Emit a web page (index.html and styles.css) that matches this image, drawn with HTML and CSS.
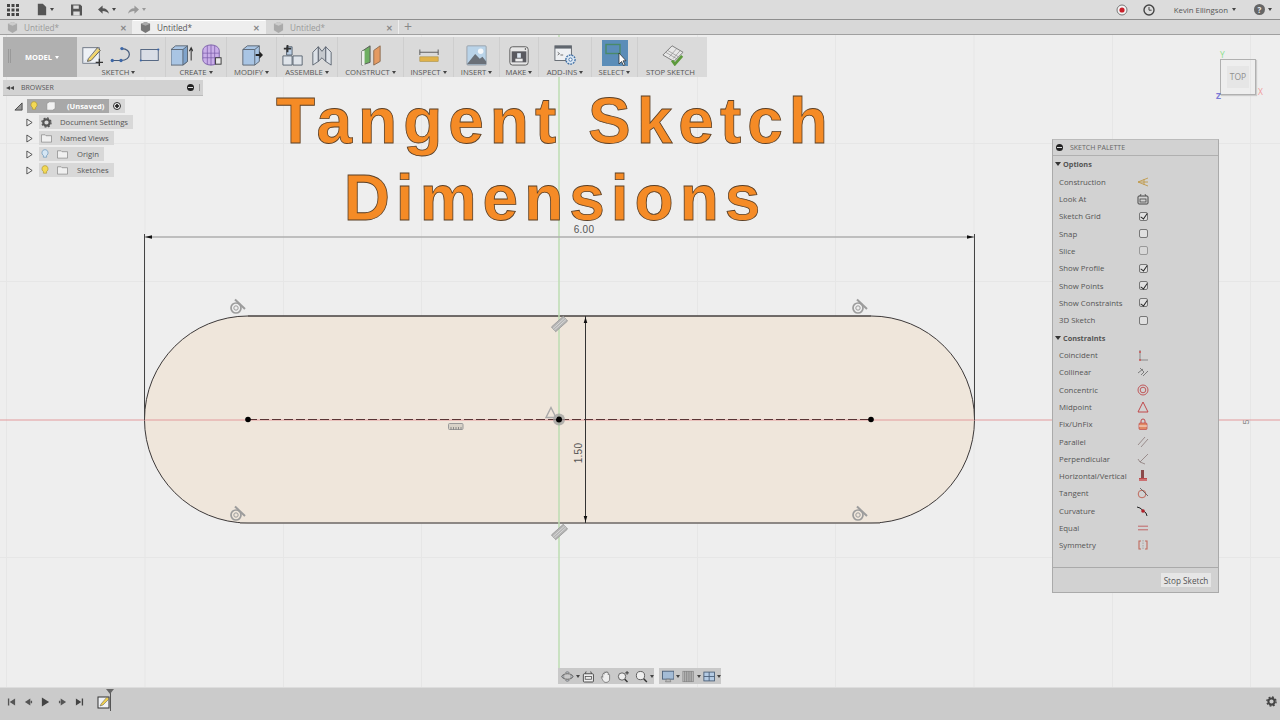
FILE: index.html
```html
<!DOCTYPE html>
<html lang="en">
<head>
<meta charset="utf-8">
<title>Tangent Sketch Dimensions</title>
<link rel="stylesheet" href="styles.css">
</head>
<body>
<div class="app">
  <header class="topbar">
    <div class="top-left">
      <svg class="ti ti-grid" viewBox="0 0 12 12"><path fill="#444" d="M0 0h3v3H0zM4.500 0h3v3h-3zM9 0h3v3H9zM0 4.500h3v3H0zM4.500 4.500h3v3h-3zM9 4.500h3v3H9zM0 9h3v3H0zM4.500 9h3v3h-3zM9 9h3v3H9z"/></svg>
      <span class="ti-group ti-doc">
        <svg class="ti" viewBox="0 0 12 14"><path fill="#555" d="M1 0h6l4 4v10H1z"/></svg><i class="caret"></i>
      </span>
      <svg class="ti ti-save" viewBox="0 0 12 12"><path fill="#555" d="M0 0h10l2 2v10H0z"/><path fill="#ddd" d="M2.500 1h6v3.500h-6zM2.500 7.500h7V12h-7z"/></svg>
      <span class="ti-group ti-undo">
        <svg class="ti" viewBox="0 0 12 10"><path fill="#555" d="M5 0v3c4 0 6 2 7 6-2-2-4-3-7-3v3L0 4.500z"/></svg><i class="caret"></i>
      </span>
      <span class="ti-group ti-redo">
        <svg class="ti" viewBox="0 0 12 10"><path fill="#999" d="M7 0v3C3 3 1 5 0 9c2-2 4-3 7-3v3l5-4.500z"/></svg><i class="caret caret-pale"></i>
      </span>
    </div>
    <div class="top-right">
      <svg class="ti-rec" viewBox="0 0 12 12"><circle cx="6" cy="6" r="5" fill="#f4f4f4" stroke="#777"/><circle cx="6" cy="6" r="2.600" fill="#c8202a"/></svg>
      <svg class="ti-clock" viewBox="0 0 12 12"><circle cx="6" cy="6" r="5" fill="none" stroke="#444" stroke-width="1.400"/><path d="M6 3v3.200h2.600" fill="none" stroke="#444"/></svg>
      <span class="user">Kevin Ellingson</span><i class="caret"></i>
      <span class="help">?</span><i class="caret"></i>
    </div>
  </header>

  <nav class="tabs">
    <div class="tab">
      <svg class="cube" viewBox="0 0 12 12"><path fill="#aaa" d="M1 2l5-2 5 2v7l-5 3-5-3z"/><path fill="#ccc" d="M1 2l5-2 5 2-5 2z"/></svg>
      <span class="tab-name">Untitled*</span><span class="tab-x">✕</span>
    </div>
    <div class="tab tab-active">
      <svg class="cube" viewBox="0 0 12 12"><path fill="#777" d="M1 2l5-2 5 2v7l-5 3-5-3z"/><path fill="#aaa" d="M1 2l5-2 5 2-5 2z"/></svg>
      <span class="tab-name">Untitled*</span><span class="tab-x">✕</span>
    </div>
    <div class="tab">
      <svg class="cube" viewBox="0 0 12 12"><path fill="#aaa" d="M1 2l5-2 5 2v7l-5 3-5-3z"/><path fill="#ccc" d="M1 2l5-2 5 2-5 2z"/></svg>
      <span class="tab-name">Untitled*</span><span class="tab-x">✕</span>
    </div>
    <span class="tab-plus">+</span>
  </nav>

  <main class="viewport">
    <svg class="canvas" viewBox="0 35 1280 652">
      <defs>
        <g id="tangent-mark" fill="none" stroke="#9c9c9c">
          <circle cx="0" cy="0" r="5" stroke-width="1.700"/>
          <circle cx="0" cy="0" r="2.200" stroke-width="1"/>
          <path d="M-1-8.500L9 1" stroke-width="2"/>
        </g>
        <g id="parallel-mark">
          <rect x="-8" y="-3.200" width="16" height="6.400" fill="#b4b4b4" stroke="#9a9a9a" stroke-width=".8"/>
          <path d="M-8-1H8M-8 1H8" stroke="#e4e4e4" stroke-width=".7"/>
        </g>
      </defs>
      <g stroke="#e6e6e6" stroke-width="1">
        <path d="M6.500 35V687M145 35V687M283.500 35V687M421.500 35V687M697.500 35V687M835.500 35V687M974 35V687M1112.500 35V687M1250.500 35V687"/>
        <path d="M0 143.500H1280M0 281.500H1280M0 557.500H1280"/>
      </g>
      <rect x="144.500" y="316" width="830" height="207" rx="103.500" fill="#efe6db" stroke="#3c3838" stroke-width="1"/>
      <path d="M248 316H871" stroke="#4a4542" stroke-width="1"/>
      <path d="M240 523H880" stroke="#8a8580" stroke-width="1.500"/>
      <path d="M0 420H1280" stroke="#e39a9c" stroke-width="1"/>
      <path d="M559 35V669" stroke="#bcdcb2" stroke-width="1.500"/>
      <path d="M248 419.500H871" stroke="#5a3434" stroke-width="1" stroke-dasharray="9 3"/>
      <path d="M144.500 234V420M974.500 234V420" stroke="#444" stroke-width="1"/>
      <path d="M145 237H974" stroke="#aeaeae" stroke-width="1.500"/>
      <path d="M145 237l7-1.800v3.600zM974 237l-7-1.800v3.600z" fill="#111"/>
      <text class="dim" x="584" y="233" text-anchor="middle">6.00</text>
      <path d="M585.500 316V523" stroke="#333" stroke-width="1"/>
      <path d="M585.500 317l-1.800 6h3.600zM585.500 522l-1.800-6h3.600z" fill="#111"/>
      <text class="dim" text-anchor="middle" transform="translate(582 453) rotate(-90)">1.50</text>
      <circle cx="248" cy="419.500" r="2.800" fill="#000"/>
      <circle cx="871" cy="419.500" r="2.800" fill="#000"/>
      <circle cx="559" cy="419.500" r="6" fill="#999" opacity=".7"/>
      <circle cx="559" cy="419.500" r="3" fill="#000"/>

      <use href="#tangent-mark" transform="translate(236 308)"/>
      <use href="#tangent-mark" transform="translate(858 308)"/>
      <use href="#tangent-mark" transform="translate(236 515)"/>
      <use href="#tangent-mark" transform="translate(858 515)"/>
      <use href="#parallel-mark" transform="translate(559.500 324) rotate(-42)"/>
      <use href="#parallel-mark" transform="translate(559.500 532) rotate(-42)"/>
      <path d="M551 407.500l5 10h-10z" fill="none" stroke="#a8a8a8" stroke-width="1.400"/>
      <rect x="448.500" y="423.500" width="14.500" height="6" rx="1" fill="#d8d2c8" stroke="#9a9a9a" stroke-width="1"/>
      <path d="M451 427v2.500M453.500 427v2.500M456 427v2.500M458.500 427v2.500M461 427v2.500" stroke="#777" stroke-width=".8"/>
      <text class="axis" transform="translate(1249 422) rotate(-90)" text-anchor="middle">5</text>
    </svg>

    <h1 class="title"><span class="title-line">Tangent Sketch</span><span class="title-line">Dimensions</span></h1>

    <div class="toolbar">
      <div class="model"><span class="grip"></span><span class="model-name">MODEL</span><i class="caret caret-white"></i></div>
      <section class="group g-sketch">
        <div class="icons">
          <svg class="icon" viewBox="0 0 24 24"><rect x="2" y="4" width="18" height="17" fill="#eef1f5" stroke="#6a7382"/><path d="M8 16l10-12 3 3-10 11-4 1z" fill="#f2d56b" stroke="#555"/><path d="M16 20h8M20 16v8" stroke="#333" stroke-width="1.500"/><path d="M2 21L20 4" stroke="#c8d2e0" stroke-width=".6"/></svg>
          <svg class="icon" viewBox="0 0 24 24"><path d="M2 18h10c12 0 12-13 1-13" fill="none" stroke="#445a7a" stroke-width="1.300"/><circle cx="2.500" cy="18" r="1.800" fill="#3d67a8"/><circle cx="12" cy="18" r="1.800" fill="#3d67a8"/><circle cx="13" cy="5" r="1.800" fill="#3d67a8"/></svg>
          <svg class="icon" viewBox="0 0 24 24"><rect x="2" y="6" width="19" height="12" fill="#d9dee6" stroke="#4d5f7c"/><circle cx="2" cy="18" r="1.200" fill="#3d67a8"/><circle cx="21" cy="6" r="1.200" fill="#3d67a8"/></svg>
        </div>
        <span class="label">SKETCH<i class="caret"></i></span>
      </section>
      <section class="group g-create">
        <div class="icons">
          <svg class="icon" viewBox="0 0 24 24"><path d="M0 6l5-4h13v17l-5 4H0z" fill="#a9c5e4" stroke="#5a6572"/><path d="M13 6l5-4v17l-5 4z" fill="#7fa3cb" stroke="#5a6572"/><path d="M0 6h13" stroke="#5a6572"/><path d="M22 18V5M20 8l2-4 2 4" fill="none" stroke="#333" stroke-width="1.100"/></svg>
          <svg class="icon" viewBox="0 0 24 24"><path d="M3 7a9 6 0 0 1 18 0v10a9 6 0 0 1-18 0z" fill="#c9aee8" stroke="#7a5ca8"/><path d="M3 10h18M3 15h18M8 2v20M12 1v22M16 2v20" stroke="#7a5ca8" stroke-width=".8"/><rect x="17" y="15" width="6" height="7" fill="#e8e8e8" stroke="#333"/></svg>
        </div>
        <span class="label">CREATE<i class="caret"></i></span>
      </section>
      <section class="group g-modify">
        <div class="icons">
          <svg class="icon" viewBox="0 0 24 24"><path d="M2 6l5-4h13v17l-5 4H2z" fill="#a9c5e4" stroke="#5a6572"/><path d="M2 6h13v17M15 6l5-4" fill="none" stroke="#5a6572"/><path d="M16 11h4V8l4 4-4 4v-3h-4z" fill="#222"/></svg>
        </div>
        <span class="label">MODIFY<i class="caret"></i></span>
      </section>
      <section class="group g-assemble">
        <div class="icons">
          <svg class="icon" viewBox="0 0 24 24"><path d="M1 13h10v10H1zM12 13h10v10H12z" fill="#dfe4ea" stroke="#55606f"/><path d="M5 3h6v9H5z" fill="#b9cde3" stroke="#55606f"/><path d="M2 5h8M6 1v8" stroke="#333" stroke-width="2"/></svg>
          <svg class="icon" viewBox="0 0 24 24"><path d="M2 9l6-6v16l-6 4zM16 3l6 6v14l-6-4z" fill="#dde2e8" stroke="#5b6470"/><path d="M8 3l4 5 4-5v16l-4-4-4 4z" fill="#c5c9ce" stroke="#5b6470"/></svg>
        </div>
        <span class="label">ASSEMBLE<i class="caret"></i></span>
      </section>
      <section class="group g-construct">
        <div class="icons">
          <svg class="icon" viewBox="0 0 24 24"><path d="M2 8l9-6v18l-9 3z" fill="#6faf62" stroke="#555"/><path d="M2 8v15h3V7z" fill="#eee"/><path d="M15 7l7-5v17l-7 4z" fill="#e49a62" stroke="#8a6a50"/></svg>
        </div>
        <span class="label">CONSTRUCT<i class="caret"></i></span>
      </section>
      <section class="group g-inspect">
        <div class="icons">
          <svg class="icon" viewBox="0 0 24 24"><path d="M2 9h20M2 6v6M22 6v6" stroke="#555" fill="none"/><rect x="2" y="14" width="20" height="5" fill="#e0b24a" stroke="#a78a3a" stroke-width=".6"/></svg>
        </div>
        <span class="label">INSPECT<i class="caret"></i></span>
      </section>
      <section class="group g-insert">
        <div class="icons">
          <svg class="icon" viewBox="0 0 24 24"><rect x="1" y="2" width="21" height="21" rx="1" fill="#b9d3e8" stroke="#98a0a8"/><path d="M1 22l9-11 5 5 3-2 4 5v3H1z" fill="#6a7078"/><circle cx="16" cy="8" r="3" fill="#f4f7fa"/></svg>
        </div>
        <span class="label">INSERT<i class="caret"></i></span>
      </section>
      <section class="group g-make">
        <div class="icons">
          <svg class="icon" viewBox="0 0 24 24"><rect x="2" y="3" width="20" height="20" rx="3" fill="#e6e6e6" stroke="#555"/><rect x="4" y="8" width="16" height="12" fill="#5a5a60"/><path d="M8 16h8v3H8z" fill="#eee"/><path d="M10 10h4v5h-4z" fill="#dfe8f2"/><circle cx="19" cy="5.500" r=".8" fill="#333"/></svg>
        </div>
        <span class="label">MAKE<i class="caret"></i></span>
      </section>
      <section class="group g-addins">
        <div class="icons">
          <svg class="icon" viewBox="0 0 24 24"><rect x="1" y="2" width="18" height="16" fill="#eef0f3" stroke="#60666e"/><path d="M1 2h18v3H1z" fill="#60666e"/><path d="M4 9l2 1.500L4 12M7 12h3" stroke="#444" fill="none" stroke-width=".8"/><circle cx="18" cy="17" r="5" fill="#dce8f4" stroke="#3f6fa5" stroke-width="1.500" stroke-dasharray="2 1"/><circle cx="18" cy="17" r="1.800" fill="#fff" stroke="#3f6fa5"/></svg>
        </div>
        <span class="label">ADD-INS<i class="caret"></i></span>
      </section>
      <section class="group g-select">
        <div class="select-btn">
          <svg class="select-icon" viewBox="0 0 26 26"><rect x="4" y="4.500" width="14" height="9" fill="none" stroke="#4a8a68" stroke-width="1.400"/><path d="M17 13v11l2.500-2.500 2 4 1.500-.8-2-3.900H24z" fill="#fff" stroke="#222" stroke-width=".7"/></svg>
        </div>
        <span class="label">SELECT<i class="caret"></i></span>
      </section>
      <section class="group g-stop">
        <div class="icons">
          <svg class="icon" viewBox="0 0 24 24"><path d="M1 12l10-10 12 7-10 10z" fill="#e7e7e7" stroke="#777"/><path d="M6 7l12 7M11 2l-5 5M4 9l12 7M16 5l-8 9M20 7l-8 9" stroke="#888" stroke-width=".7"/><path d="M11 18l3 4 8-9" fill="none" stroke="#5d9a3c" stroke-width="3"/></svg>
        </div>
        <span class="label">STOP SKETCH</span>
      </section>
    </div>

    <aside class="browser">
      <div class="browser-head">
        <span class="arrows"><i></i><i></i></span><span class="browser-title">BROWSER</span>
        <span class="dot-minus"></span><span class="pipe"></span>
      </div>
      <ul class="tree">
        <li class="row row-root">
          <svg class="tri-open" viewBox="0 0 10 10"><path d="M9 1v8H1z" fill="#999" stroke="#444"/></svg>
          <span class="pill pill-root">
            <svg class="bulb" viewBox="0 0 10 12"><path d="M5 .5a4 4 0 0 1 2 7.400V10H3V7.900A4 4 0 0 1 5 .5z" fill="#f3d955" stroke="#a28a28" stroke-width=".7"/></svg>
            <svg class="box" viewBox="0 0 12 12"><path d="M1 3l3-2h7v8l-3 2H1z" fill="#f2f2f2" stroke="#888" stroke-width=".7"/></svg>
            <span class="root-name">(Unsaved)</span>
          </span>
          <span class="radio"><i></i></span>
        </li>
        <li class="row">
          <svg class="tri" viewBox="0 0 8 10"><path d="M1 1l6 4-6 4z" fill="#f2f2f2" stroke="#444"/></svg>
          <span class="pill">
            <svg class="gear" viewBox="0 0 12 12"><circle cx="6" cy="6" r="3.500" fill="none" stroke="#555" stroke-width="2.400"/><circle cx="6" cy="6" r="5" fill="none" stroke="#555" stroke-width="1.400" stroke-dasharray="2 1.930"/></svg>
            <span class="item-a">Document Settings</span>
          </span>
        </li>
        <li class="row">
          <svg class="tri" viewBox="0 0 8 10"><path d="M1 1l6 4-6 4z" fill="#f2f2f2" stroke="#444"/></svg>
          <span class="pill">
            <svg class="folder" viewBox="0 0 12 10"><path d="M.5 1.500h4l1 1h6v7H.500z" fill="#f0f0f0" stroke="#888" stroke-width=".8"/></svg>
            <span class="item-a">Named Views</span>
          </span>
        </li>
        <li class="row">
          <svg class="tri" viewBox="0 0 8 10"><path d="M1 1l6 4-6 4z" fill="#f2f2f2" stroke="#444"/></svg>
          <span class="pill">
            <svg class="bulb bulb-s" viewBox="0 0 10 12"><path d="M5 .5a4 4 0 0 1 2 7.400V10H3V7.900A4 4 0 0 1 5 .5z" fill="#d5e6f4" stroke="#5f8db5" stroke-width=".8"/></svg>
            <svg class="folder folder-s" viewBox="0 0 12 10"><path d="M.5 1.500h4l1 1h6v7H.500z" fill="#f0f0f0" stroke="#888" stroke-width=".8"/></svg>
            <span class="item-b">Origin</span>
          </span>
        </li>
        <li class="row">
          <svg class="tri" viewBox="0 0 8 10"><path d="M1 1l6 4-6 4z" fill="#f2f2f2" stroke="#444"/></svg>
          <span class="pill">
            <svg class="bulb bulb-s" viewBox="0 0 10 12"><path d="M5 .5a4 4 0 0 1 2 7.400V10H3V7.900A4 4 0 0 1 5 .5z" fill="#f3d955" stroke="#a28a28" stroke-width=".7"/></svg>
            <svg class="folder folder-s" viewBox="0 0 12 10"><path d="M.5 1.500h4l1 1h6v7H.500z" fill="#f0f0f0" stroke="#888" stroke-width=".8"/></svg>
            <span class="item-b">Sketches</span>
          </span>
        </li>
      </ul>
    </aside>

    <div class="viewcube">
      <span class="axis-y">Y</span><span class="axis-x">X</span><span class="axis-z">Z</span>
      <div class="cube-face"><span>TOP</span></div>
    </div>

    <aside class="palette">
      <div class="pal-head"><span class="dot-minus"></span><span class="pal-title">SKETCH PALETTE</span></div>
      <div class="pal-body">
        <div class="pal-section"><i class="sec-tri"></i>Options</div>
        <div class="pal-row"><span class="pal-label">Construction</span><svg class="pi" viewBox="0 0 12 12"><path d="M1 6l10-4M1 6l10 4M7 3v6M1 6h10" fill="none" stroke="#c09a4a" stroke-width=".9"/></svg></div>
        <div class="pal-row"><span class="pal-label">Look At</span><svg class="pi" viewBox="0 0 12 12"><rect x="1" y="3" width="10" height="8" rx="1" fill="none" stroke="#444"/><rect x="3" y="6" width="6" height="3" fill="none" stroke="#444" stroke-width=".8"/><path d="M3 3l1-2M9 3L8 1" stroke="#444" stroke-width=".8"/></svg></div>
        <div class="pal-row"><span class="pal-label">Sketch Grid</span><span class="check on"></span></div>
        <div class="pal-row"><span class="pal-label">Snap</span><span class="check"></span></div>
        <div class="pal-row"><span class="pal-label">Slice</span><span class="check off"></span></div>
        <div class="pal-row"><span class="pal-label">Show Profile</span><span class="check on"></span></div>
        <div class="pal-row"><span class="pal-label">Show Points</span><span class="check on"></span></div>
        <div class="pal-row"><span class="pal-label">Show Constraints</span><span class="check on"></span></div>
        <div class="pal-row"><span class="pal-label">3D Sketch</span><span class="check"></span></div>
        <div class="pal-section"><i class="sec-tri"></i>Constraints</div>
        <div class="pal-row"><span class="pal-label">Coincident</span><svg class="pi" viewBox="0 0 12 12"><path d="M3 1v10h8" fill="none" stroke="#777" stroke-width=".8"/><circle cx="3" cy="3" r="1" fill="#c55"/><circle cx="3" cy="11" r="1" fill="#c55"/></svg></div>
        <div class="pal-row"><span class="pal-label">Collinear</span><svg class="pi" viewBox="0 0 12 12"><path d="M1 7l5-4M6 10l5-5M3 2l4 4-3 3" fill="none" stroke="#666" stroke-width=".8"/></svg></div>
        <div class="pal-row"><span class="pal-label">Concentric</span><svg class="pi" viewBox="0 0 12 12"><circle cx="6" cy="6" r="5" fill="none" stroke="#c0595b" stroke-width="1"/><circle cx="6" cy="6" r="2.800" fill="none" stroke="#c0595b" stroke-width="1"/></svg></div>
        <div class="pal-row"><span class="pal-label">Midpoint</span><svg class="pi" viewBox="0 0 12 12"><path d="M6 1l5 10H1z" fill="none" stroke="#c0494b" stroke-width="1"/></svg></div>
        <div class="pal-row"><span class="pal-label">Fix/UnFix</span><svg class="pi" viewBox="0 0 12 12"><rect x="2" y="5" width="8" height="6.500" rx="1" fill="#e08a64" stroke="#c0494b" stroke-width=".7"/><path d="M4 5V3a2 2 0 0 1 4 0v2" fill="none" stroke="#c0494b"/><path d="M2 8h8" stroke="#fff" stroke-width=".8"/></svg></div>
        <div class="pal-row"><span class="pal-label">Parallel</span><svg class="pi" viewBox="0 0 12 12"><path d="M1 9l7-8M4 11l7-8" fill="none" stroke="#8a7a78" stroke-width=".8"/></svg></div>
        <div class="pal-row"><span class="pal-label">Perpendicular</span><svg class="pi" viewBox="0 0 12 12"><path d="M11 1L3 9l-2-3M3 9l5 2" fill="none" stroke="#8a7a78" stroke-width=".8"/></svg></div>
        <div class="pal-row"><span class="pal-label">Horizontal/Vertical</span><svg class="pi" viewBox="0 0 12 12"><rect x="4" y="0" width="3" height="8" fill="#8b4a4a"/><path d="M2 8h8v3H2z" fill="#c0494b"/><path d="M3 11V9M5 11V9M7 11V9M9 11V9" stroke="#eee" stroke-width=".5"/></svg></div>
        <div class="pal-row"><span class="pal-label">Tangent</span><svg class="pi" viewBox="0 0 12 12"><circle cx="5" cy="7" r="3.800" fill="none" stroke="#c0695b"/><path d="M3 1l8 8" stroke="#555" stroke-width=".8"/></svg></div>
        <div class="pal-row"><span class="pal-label">Curvature</span><svg class="pi" viewBox="0 0 12 12"><path d="M0 2l3 1M3 3l6 5M9 8l1 3" stroke="#222" stroke-width="1" fill="none"/><circle cx="6" cy="6" r="1.800" fill="#b0202a"/></svg></div>
        <div class="pal-row"><span class="pal-label">Equal</span><svg class="pi" viewBox="0 0 12 12"><path d="M1 4.200h10M1 7.800h10" stroke="#c0595b" stroke-width=".9"/></svg></div>
        <div class="pal-row"><span class="pal-label">Symmetry</span><svg class="pi" viewBox="0 0 12 12"><path d="M4 2H2v8h2M8 2h2v8H8" fill="none" stroke="#c0695b" stroke-width="1.100"/><path d="M6 1v10" stroke="#999" stroke-dasharray="1.500 1" stroke-width=".8"/></svg></div>
      </div>
      <div class="pal-foot"><button class="stop-btn" type="button">Stop Sketch</button></div>
    </aside>

    <div class="navbar">
      <div class="nav-group">
        <svg class="ni ni-orbit" viewBox="0 0 14 14"><path d="M7 1l2 2H5zM7 13l-2-2h4zM1 7l2-2v4zM13 7l-2 2V5z" fill="#dfe8f2" stroke="#555" stroke-width=".6"/><ellipse cx="7" cy="7" rx="6" ry="3" fill="none" stroke="#666"/></svg><i class="caret"></i>
        <svg class="ni" viewBox="0 0 14 14"><rect x="1.500" y="4" width="11" height="9" rx="1" fill="#eee" stroke="#444"/><rect x="3.500" y="7" width="7" height="3" fill="none" stroke="#444" stroke-width=".8"/><path d="M3.500 4l1-2.500M10.500 4l-1-2.500" stroke="#444"/></svg>
        <svg class="ni" viewBox="0 0 14 14"><path d="M3 8V4.500c0-1 1.500-1 1.500 0V3c0-1 1.500-1 1.500 0v-.5c0-1 1.500-1 1.500 0V3c0-1 1.500-1 1.500 0v2c0-1 1.500-.7 1.500.3V10c0 2-2 3.500-4 3.500S3.500 12 2.500 10L1.500 8c-.3-1 1-1.500 1.500 0z" fill="#eee" stroke="#555" stroke-width=".7"/></svg>
        <svg class="ni" viewBox="0 0 14 14"><circle cx="5.500" cy="7" r="4" fill="#eee" stroke="#555"/><path d="M8.500 10l3 3" stroke="#333" stroke-width="1.500"/><path d="M9 3h4M11 1v4" stroke="#333"/></svg>
        <svg class="ni ni-zoom" viewBox="0 0 14 14"><circle cx="6" cy="6" r="4.500" fill="#eee" stroke="#555"/><path d="M9.500 9.500l3.500 3.500" stroke="#333" stroke-width="1.600"/></svg><i class="caret"></i>
      </div>
      <div class="nav-group nav-group2">
        <svg class="ni" viewBox="0 0 14 14"><rect x=".5" y="1" width="13" height="9" fill="#a4bcd6" stroke="#4a5f78"/><path d="M5 10h4l1 3H4z" fill="#bbb" stroke="#666" stroke-width=".6"/></svg><i class="caret"></i>
        <svg class="ni" viewBox="0 0 14 14"><rect x="1" y="1" width="12" height="12" fill="#bbb" stroke="#777" stroke-width=".6"/><path d="M3 1v12M5 1v12M7 1v12M9 1v12M11 1v12" stroke="#777" stroke-width=".8"/></svg><i class="caret"></i>
        <svg class="ni" viewBox="0 0 14 14"><rect x="1" y="2" width="12" height="10" fill="#b4cbe4" stroke="#4a5f78"/><path d="M7 2v10M1 7h12" stroke="#4a5f78"/></svg><i class="caret"></i>
      </div>
    </div>
  </main>

  <footer class="timeline">
    <svg class="tl" viewBox="0 0 10 10"><path d="M1 1h1.500v8H1zM9 1v8L3 5z" fill="#555"/></svg>
    <svg class="tl" viewBox="0 0 10 10"><path d="M7 1v8L1 5zM7.500 3.500h1.500v3H7.500z" fill="#555"/></svg>
    <svg class="tl" viewBox="0 0 10 10"><path d="M1 0v10l8-5z" fill="#444"/></svg>
    <svg class="tl" viewBox="0 0 10 10"><path d="M3 1v8l6-4zM1 3.500h1.500v3H1z" fill="#555"/></svg>
    <svg class="tl" viewBox="0 0 10 10"><path d="M1 1v8l6-4zM7.500 1H9v8H7.500z" fill="#444"/></svg>
    <span class="tl-item">
      <svg class="tl-sketch" viewBox="0 0 14 14"><rect x="1" y="2" width="11" height="11" fill="#f0f2f5" stroke="#333"/><path d="M4 9l6-7 2 2-6 6-3 1z" fill="#f0d050" stroke="#555" stroke-width=".5"/></svg>
      <span class="tl-marker"></span>
    </span>
    <svg class="tl-gear" viewBox="0 0 12 12"><circle cx="6" cy="6" r="3.400" fill="none" stroke="#444" stroke-width="2.200"/><circle cx="6" cy="6" r="5" fill="none" stroke="#444" stroke-width="1.500" stroke-dasharray="2 1.930"/></svg>
  </footer>
</div>
</body>
</html>
```

FILE: styles.css
```css
* { box-sizing: border-box; }
html, body { margin: 0; padding: 0; }
body {
  font-family: "Open Sans", "Liberation Sans", sans-serif;
  color: #555;
  background: #eee;
}
i { display: inline-block; font-style: normal; }
ul { list-style: none; margin: 0; padding: 0; }

.app { width: 1280px; height: 720px; display: flex; flex-direction: column; overflow: hidden; }

.caret { width: 0; height: 0; border-left: 2.5px solid transparent; border-right: 2.5px solid transparent; border-top: 3px solid #444; vertical-align: middle; }
.caret-pale { border-top-color: #999; }
.caret-white { border-top-color: #fff; }

/* top bar */
.topbar { height: 20px; flex: none; display: flex; justify-content: space-between; align-items: center; background: #dcdcdc; border-bottom: 1px solid #8e8e8e; }
.top-left { display: flex; align-items: center; padding-left: 7px; }
.ti { display: block; width: 11px; height: 12px; }
.ti-grid { width: 12px; height: 12px; }
.ti-group { display: flex; align-items: center; gap: 3px; }
.ti-doc { margin-left: 18px; }
.ti-doc .ti { width: 10px; height: 13px; }
.ti-save { margin-left: 17px; }
.ti-undo { margin-left: 16px; }
.ti-redo { margin-left: 12px; }
.top-right { display: flex; align-items: center; padding-right: 8px; }
.ti-rec { width: 12px; height: 12px; display: block; }
.ti-clock { width: 12px; height: 12px; display: block; margin-left: 15px; }
.user { font-size: 7.800px; margin-left: 19px; color: #555; }
.user + .caret { margin-left: 4px; }
.help { width: 11px; height: 11px; border-radius: 50%; background: #666; color: #eee; font-size: 8px; font-weight: 700; line-height: 11px; text-align: center; margin-left: 18px; }
.help + .caret { margin-left: 3px; }

/* tabs */
.tabs { height: 15px; flex: none; display: flex; align-items: stretch; background: #d8d8d8; border-bottom: 1px solid #a0a0a0; }
.tab { width: 133px; display: flex; align-items: center; padding: 0 5px 0 7px; border-right: 1px solid #eee; color: #999; }
.tab-active { background: #eeeeee; color: #555; border-top: 1px solid #fff; }
.cube { width: 11px; height: 11px; display: block; }
.tab-name { font-size: 8.200px; font-weight: 400; margin-left: 6px; flex: 1; }
.tab-active .tab-name { margin-left: 6px; }
.tab-x { font-size: 8px; font-weight: 700; color: #888; }
.tab-plus { font-size: 14px; line-height: 13px; color: #888; margin-left: 5px; }

/* viewport */
.viewport { flex: 1; position: relative; background: #eeeeee; overflow: hidden; }
.canvas { position: absolute; left: 0; top: 0; width: 1280px; height: 652px; display: block; }
.dim { font: 10px "Liberation Sans", sans-serif; fill: #555; letter-spacing: .3px; }
.axis { font: 9px "Liberation Sans", sans-serif; fill: #888; }

.title {
  position: absolute; left: 0; top: 60px; width: 1110px; margin: 0; text-align: center;
  display: flex; flex-direction: column; gap: 25px;
  font: 700 64px/52px "Liberation Sans", sans-serif; letter-spacing: 6px; word-spacing: 2px;
  color: #f58b26; -webkit-text-stroke: .8px #5a4028;
}
.title-line { display: block; }

/* toolbar */
.toolbar { position: absolute; left: 3px; top: 2px; height: 40px; display: flex; background: #dadada; }
.model { width: 74px; display: flex; align-items: center; justify-content: center; gap: 3px; padding-left: 4px; background: #b0b0b0; position: relative; }
.grip { position: absolute; left: 5px; top: 12px; width: 3px; height: 14px; border-left: 1px solid #999; border-right: 1px solid #999; }
.model-name { font-size: 7.500px; font-weight: 700; color: #fff; }
.group { display: flex; flex-direction: column; align-items: center; padding-top: 6px; border-right: 1px solid #cecece; position: relative; }
.icons { height: 23px; display: flex; justify-content: center; align-items: center; }
.icon { width: 22px; height: 22px; display: block; }
.label { position: absolute; top: 30px; left: 0; right: 0; text-align: center; font-size: 7.700px; line-height: 10px; color: #555; white-space: nowrap; }
.label .caret { margin-left: 2px; }
.g-sketch { width: 89px; }
.g-sketch .icons { gap: 7px; }
.g-sketch .label { right: 5px; }
.g-create { width: 61px; }
.g-create .icons { gap: 7px; }
.g-modify { width: 50px; }
.g-assemble { width: 61px; }
.g-assemble .icons { gap: 7px; }
.g-construct { width: 66px; }
.g-inspect { width: 50px; }
.g-insert { width: 46px; }
.g-make { width: 39px; }
.g-addins { width: 53px; }
.g-select { width: 46px; }
.g-stop { width: 69px; border-right: 0; }
.g-stop .label { right: 4px; }
.select-btn { width: 26px; height: 26px; margin-top: -3px; background: #5b8db8; }
.select-icon { width: 26px; height: 26px; display: block; }

/* browser */
.browser { position: absolute; left: 3px; top: 45px; width: 200px; }
.browser-head { height: 16px; display: flex; align-items: center; padding: 0 3px 0 3px; background: #d2d2d2; border-bottom: 1px solid #bbb; }
.arrows { display: flex; width: 15px; }
.arrows i { width: 0; height: 0; border-top: 2.500px solid transparent; border-bottom: 2.500px solid transparent; border-right: 4px solid #444; }
.browser-title { font-size: 7px; color: #555; flex: 1; }
.dot-minus { width: 7px; height: 7px; border-radius: 50%; background: #222; display: block; position: relative; }
.dot-minus::after { content: ""; position: absolute; left: 1px; right: 1px; top: 3px; height: 1px; background: #ddd; }
.pipe { width: 1px; height: 7px; background: #999; margin-left: 5px; }
.tree { padding-top: 2px; }
.row { height: 16px; display: flex; align-items: center; padding-left: 23px; }
.tri { width: 7px; height: 9px; display: block; margin-right: 6px; flex: none; }
.tri-open { width: 9px; height: 9px; display: block; margin-left: -12px; margin-right: 4px; flex: none; }
.pill { height: 14px; display: flex; align-items: center; background: #d8d8d8; padding-right: 5px; font-size: 7.700px; color: #555; }
.pill-root { background: #a8a8a8; width: 82px; padding: 0 0 0 3px; }
.bulb { width: 8px; height: 10px; display: block; flex: none; }
.box { width: 10px; height: 10px; display: block; margin-left: 8px; }
.root-name { font-weight: 700; color: #fff; margin-left: 11px; font-size: 7.500px; }
.radio { width: 16px; height: 14px; background: #d8d8d8; display: flex; align-items: center; justify-content: center; }
.radio i { width: 8px; height: 8px; border-radius: 50%; border: 1px solid #333; background: radial-gradient(circle, #222 0 1.500px, #eee 2px); }
.gear { width: 11px; height: 11px; margin-left: 2px; display: block; }
.folder { width: 11px; height: 10px; margin-left: 2px; display: block; }
.item-a { margin-left: 8px; }
.bulb-s { margin-left: 2px; }
.folder-s { margin-left: 8px; }
.item-b { margin-left: 9px; }

/* view cube */
.viewcube { position: absolute; left: 1220px; top: 24px; width: 36px; height: 36px; }
.cube-face { width: 100%; height: 100%; border: 1px solid #b0b0b0; display: flex; align-items: center; justify-content: center; box-shadow: 1px 1px 1px #ccc; }
.cube-face span { width: 22px; height: 22px; background: #e6e6e6; font-size: 8.500px; color: #909090; line-height: 22px; text-align: center; }
.axis-y, .axis-x, .axis-z { position: absolute; font-size: 8.500px; line-height: 9px; }
.axis-y { left: 0; top: -9px; color: #8fe08f; }
.axis-x { left: 38px; top: 28px; color: #ee9a9a; }
.axis-z { left: -4px; top: 32px; color: #7a7ad6; font-weight: 700; }

/* palette */
.palette { position: absolute; left: 1052px; top: 104px; width: 167px; height: 454px; display: flex; flex-direction: column; background: #d2d2d2; border: 1px solid #aaa; border-top-color: #bbb; }
.pal-head { height: 15.600px; flex: none; display: flex; align-items: center; padding-left: 3px; border-bottom: 1px solid #b0b0b0; }
.pal-title { font-size: 7px; color: #666; margin-left: 7px; }
.pal-body { flex: 1; }
.pal-section, .pal-row { height: 17.330px; display: flex; align-items: center; font-size: 7.800px; color: #555; }
.pal-section { padding-left: 2px; font-weight: 700; font-size: 7.300px; }
.sec-tri { width: 0; height: 0; border-left: 3px solid transparent; border-right: 3px solid transparent; border-top: 4px solid #333; margin-right: 2px; }
.pal-row { padding-left: 6px; }
.pal-label { width: 76px; white-space: nowrap; }
.pi { width: 12px; height: 12px; display: block; margin-left: 2px; }
.check { width: 9px; height: 9px; margin-left: 3.500px; border: 1px solid #777; border-radius: 2px; background: #e0e0e0; position: relative; }
.check.off { border-color: #999; background: #d8d8d8; }
.check.on::after { content: ""; position: absolute; left: 2.500px; top: -.5px; width: 3px; height: 6px; border-right: 1px solid #222; border-bottom: 1px solid #222; transform: rotate(35deg); }
.pal-foot { height: 25px; flex: none; border-top: 1px solid #aaa; display: flex; align-items: center; justify-content: flex-end; padding-right: 7px; }
.stop-btn { width: 50px; height: 14px; padding: 0; border: 0; background: #e6e6e6; color: #555; font: 8.200px "Open Sans", sans-serif; }

/* nav bar */
.navbar { position: absolute; left: 558px; top: 633px; height: 16px; display: flex; gap: 5px; }
.nav-group { width: 96px; display: flex; align-items: center; gap: 2px; padding-left: 3px; background: #c9c9c9; }
.nav-group2 { width: 62px; gap: 2px; }
.ni { width: 13px; height: 13px; display: block; }
.nav-group .ni + .ni { margin-left: 3px; }

/* timeline */
.timeline { height: 33px; flex: none; display: flex; align-items: center; gap: 8px; padding: 0 0 5px 7px; background: #cbcbcb; border-top: 1px solid #ddd; position: relative; }
.tl { width: 9px; height: 10px; display: block; }
.tl-item { display: block; position: relative; width: 14px; height: 14px; margin-left: 5px; }
.tl-sketch { width: 14px; height: 14px; display: block; }
.tl-marker { position: absolute; left: 13px; top: -6px; width: 1px; height: 22px; background: #555; }
.tl-marker::before { content: ""; position: absolute; left: -4px; top: 0; border-left: 4px solid transparent; border-right: 4px solid transparent; border-top: 5px solid #666; }
.tl-gear { width: 11px; height: 11px; display: block; margin-left: auto; margin-right: 3px; }
```
